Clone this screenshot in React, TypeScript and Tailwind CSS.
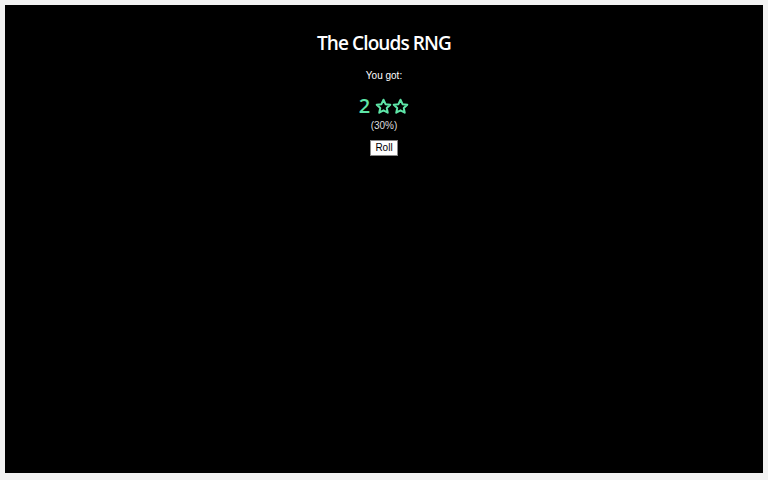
function Star() {
  return (
    <svg width="17" height="17" viewBox="0 0 24 24" fill="none" stroke="currentColor" strokeWidth="2.8" strokeLinejoin="round">
      <path d="M12 2.5l2.9 6.2 6.7.8-5 4.6 1.4 6.7L12 17.4l-6 3.4 1.4-6.7-5-4.6 6.7-.8z" />
    </svg>
  );
}

export default function App() {
  return (
    <div className="h-[480px] bg-[#f2f2f2] p-[5px] pb-[7px]">
      <div className="flex h-full flex-col items-center bg-black pt-[23px] text-white">
        <h1 className="font-['Open_Sans',sans-serif] text-[19px] font-semibold leading-[30px] tracking-[-0.9px]">
          The Clouds RNG
        </h1>
        <p className="mt-[12px] font-['Liberation_Sans',sans-serif] text-[10px] leading-[12px]">
          You got:
        </p>
        <div className="mt-[12px] flex items-center text-[#5ee6a8]">
          <span className="mr-[5px] font-['Open_Sans',sans-serif] text-[20px] font-semibold leading-[24px]">2</span>
          <Star />
          <Star />
        </div>
        <p className="mt-[2px] font-['Liberation_Sans',sans-serif] text-[10px] leading-[12px] text-[#dddddd]">
          (30%)
        </p>
        <button className="mt-[8px] border border-[#888] bg-white px-[4px] py-[1px] font-['Liberation_Sans',sans-serif] text-[10px] leading-[12px] text-black">
          Roll
        </button>
      </div>
    </div>
  );
}
